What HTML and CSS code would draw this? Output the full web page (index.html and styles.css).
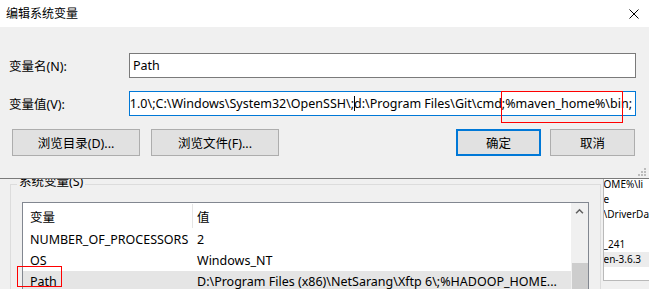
FILE: index.html
```html
<!DOCTYPE html>
<html lang="zh-CN">
<head>
    <meta charset="UTF-8">
    <title>编辑系统变量</title>
    <link rel="stylesheet" href="styles.css">
</head>
<body>

<div class="screen">
    <!-- edit dialog on top -->
    <div class="dialog">
        <div class="titlebar">
            <span class="title">编辑系统变量</span>
            <svg class="close" width="10" height="10" viewBox="0 0 10 10">
                <path d="M0.5 0.5 L9.5 9.5 M9.5 0.5 L0.5 9.5" stroke="#000" stroke-width="1"/>
            </svg>
        </div>
        <div class="dialog-body">
            <div class="field-row">
                <span class="field-label">变量名(N):</span>
                <div class="textbox">Path</div>
            </div>
            <div class="field-row">
                <span class="field-label">变量值(V):</span>
                <div class="textbox focused">
                    <span class="value">v1.0\;C:\Windows\System32\OpenSSH\;<span class="caret"></span>d:\Program Files\Git\cmd;%maven_home%\bin;</span>
                </div>
            </div>
            <div class="button-row">
                <button class="btn wide">浏览目录(D)...</button>
                <button class="btn wide">浏览文件(F)...</button>
                <span class="spacer"></span>
                <button class="btn default">确定</button>
                <button class="btn">取消</button>
            </div>
            <svg class="grip" width="10" height="10" viewBox="0 0 10 10">
                <rect x="8" y="2" width="2" height="2" fill="#bcbcbc"/>
                <rect x="5" y="5" width="2" height="2" fill="#bcbcbc"/>
                <rect x="8" y="5" width="2" height="2" fill="#bcbcbc"/>
                <rect x="2" y="8" width="2" height="2" fill="#bcbcbc"/>
                <rect x="5" y="8" width="2" height="2" fill="#bcbcbc"/>
                <rect x="8" y="8" width="2" height="2" fill="#bcbcbc"/>
            </svg>
        </div>
    </div>

    <!-- environment variables window behind -->
    <div class="behind">
        <div class="env-panel">
            <div class="group">
                <span class="group-label">系统变量(S)</span>
                <div class="listview">
                    <div class="list-main">
                        <div class="list-row header">
                            <span class="col-name">变量</span>
                            <span class="col-value">值</span>
                        </div>
                        <div class="list-row">
                            <span class="col-name">NUMBER_OF_PROCESSORS</span>
                            <span class="col-value">2</span>
                        </div>
                        <div class="list-row">
                            <span class="col-name">OS</span>
                            <span class="col-value">Windows_NT</span>
                        </div>
                        <div class="list-row selected">
                            <span class="col-name">Path</span>
                            <span class="col-value">D:\Program Files (x86)\NetSarang\Xftp 6\;%HADOOP_HOME...</span>
                        </div>
                    </div>
                    <div class="scrollbar">
                        <svg class="arrow-up" width="17" height="17" viewBox="0 0 17 17">
                            <path d="M5 10.5 L8.5 7 L12 10.5" fill="none" stroke="#606060" stroke-width="1.6"/>
                        </svg>
                        <div class="thumb"></div>
                    </div>
                </div>
            </div>
        </div>
        <div class="side-window">
            <div class="side-list">
                <div class="side-row">OME%\li</div>
                <div class="side-row">e</div>
                <div class="side-row">\DriverDa</div>
                <div class="side-row"></div>
                <div class="side-row">_241</div>
                <div class="side-row picked">en-3.6.3</div>
            </div>
        </div>
    </div>

    <!-- red annotation boxes -->
    <div class="mark mark-bin"></div>
    <div class="mark mark-path"></div>
</div>

</body>
</html>
```

FILE: styles.css
```css
* {
    margin: 0;
    padding: 0;
    box-sizing: border-box;
}

html, body {
    width: 649px;
    height: 289px;
    overflow: hidden;
    background: #f0f0f0;
    font-family: "Noto Sans", "Noto Sans CJK SC", sans-serif;
    font-size: 12.5px;
    color: #000;
}

.screen {
    position: relative;
    width: 649px;
    height: 289px;
    overflow: hidden;
}

/* Dialog */
.dialog {
    height: 179px;
    border-bottom: 1px solid #7a7a7a;
    background: #f0f0f0;
    display: flex;
    flex-direction: column;
}

.titlebar {
    height: 27px;
    background: #fff;
    display: flex;
    align-items: center;
    justify-content: space-between;
    padding: 0 10px 2px 6px;
}

.title {
    font-size: 12px;
}

.close {
    margin-top: 2px;
}

.dialog-body {
    position: relative;
    flex: 1;
    padding: 26px 13px 0 9px;
}

.field-row {
    display: flex;
    align-items: center;
    margin-bottom: 13px;
}

.field-label {
    width: 120px;
}

.textbox {
    flex: 1;
    height: 25px;
    background: #fff;
    border: 1px solid #7a7a7a;
    padding: 0 3px;
    display: flex;
    align-items: center;
    white-space: nowrap;
    overflow: hidden;
}

.textbox.focused {
    border-color: #0078d7;
    justify-content: flex-end;
}

.value {
    flex-shrink: 0;
}

.caret {
    display: inline-block;
    width: 1px;
    height: 15px;
    margin: 0 -1px 0 0;
    background: #000;
    vertical-align: -3px;
}

.button-row {
    display: flex;
    margin: 5px 1px 0 3px;
    gap: 11px;
}

.spacer {
    flex: 1;
}

.btn {
    height: 27px;
    width: 85px;
    background: #e1e1e1;
    border: 1px solid #adadad;
    font: inherit;
    color: #000;
}

.btn.wide {
    width: 128px;
}

.btn.default {
    border: 2px solid #0078d7;
    margin-right: -2px;
}

.grip {
    position: absolute;
    right: 3px;
    bottom: 2px;
}

/* Window behind */
.behind {
    display: flex;
    height: 110px;
    overflow: hidden;
}

.env-panel {
    width: 612px;
    padding: 5px 0 0 10px;
}

.group {
    position: relative;
    width: 591px;
    height: 140px;
    border: 1px solid #dcdcdc;
    padding: 17px 0 0 11px;
}

.group-label {
    position: absolute;
    left: 6px;
    top: -11px;
    padding: 0 2px;
    background: #f0f0f0;
    line-height: 16px;
}

.listview {
    width: 567px;
    height: 120px;
    border: 1px solid #828790;
    background: #fff;
    display: flex;
}

.list-main {
    flex: 1;
}

.list-row {
    display: flex;
    height: 21px;
    align-items: center;
    white-space: nowrap;
}

.list-row.header {
    height: 26px;
}

.list-row.header .col-name {
    border-right: 1px solid #e5e5e5;
    height: 24px;
    display: flex;
    align-items: center;
}

.list-row.selected {
    background: #e5e5e5;
}

.col-name {
    width: 170px;
    padding-left: 7px;
}

.col-value {
    padding-left: 4px;
}

.scrollbar {
    width: 17px;
    background: #f0f0f0;
    display: flex;
    flex-direction: column;
}

.arrow-up {
    display: block;
}

.thumb {
    margin: 43px 0 0 1px;
    height: 60px;
    background: #cdcdcd;
}

.side-window {
    flex: 1;
    border-left: 1px solid #b9b9b9;
    background: #fff;
    height: 102px;
    border-bottom: 1px solid #b9b9b9;
}

.side-list {
    margin-top: -2px;
    font-size: 10px;
    white-space: nowrap;
}

.side-row {
    height: 15px;
    line-height: 15px;
    overflow: hidden;
}

.side-row.picked {
    background: #ececec;
}

/* red annotation boxes */
.mark {
    position: absolute;
    border: 1px solid #ff0000;
}

.mark-bin {
    left: 501px;
    top: 91px;
    width: 122px;
    height: 32px;
}

.mark-path {
    left: 17px;
    top: 266px;
    width: 45px;
    height: 21px;
}
```
